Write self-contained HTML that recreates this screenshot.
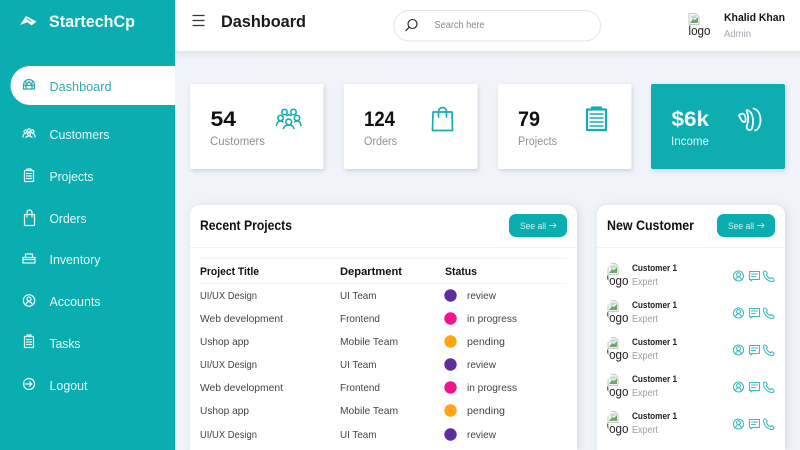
<!DOCTYPE html>
<html lang="en"><head><meta charset="utf-8"><title>Dashboard</title>
<style>
html,body{margin:0;padding:0;width:800px;height:450px;overflow:hidden;background:#f0f3f9}
svg{display:block}
text{font-family:"Liberation Sans",sans-serif}
.nav{font-size:13px;fill:#e6f9f9}
.td{font-size:10.3px;fill:#444}
.th{font-size:11px;font-weight:700;fill:#111}
.c1{font-size:9px;font-weight:700;fill:#222}
.c2{font-size:10px;fill:#9a9fa8}
.lb{font-size:11.5px;fill:#8d9299}
.num{font-size:21px;font-weight:700;fill:#111}
.see{font-size:9.5px;fill:#d4f3f3}
.h2{font-size:14px;font-weight:700;fill:#111}
.alt{font-size:12.5px;fill:#222}
.ic{fill:none;stroke:#14aeb0;stroke-width:1.6;stroke-linecap:round;stroke-linejoin:round}
.nv{fill:none;stroke:#e6f9f9;stroke-width:1.25;stroke-linecap:round;stroke-linejoin:round}
.mi{fill:none;stroke:#3dbcbe;stroke-width:1.1;stroke-linecap:round;stroke-linejoin:round}
</style></head><body>
<svg width="800" height="450" viewBox="0 0 800 450" xmlns="http://www.w3.org/2000/svg">
<defs>
<linearGradient id="hs" x1="0" y1="0" x2="0" y2="1"><stop offset="0" stop-color="#e4e6ea"/><stop offset="1" stop-color="#f0f3f9"/></linearGradient>
<filter id="sh" x="-10%" y="-10%" width="120%" height="125%"><feDropShadow dx="1" dy="2" stdDeviation="2" flood-color="#8a94a8" flood-opacity=".35"/></filter>
<filter id="sp" x="-5%" y="-5%" width="110%" height="110%"><feDropShadow dx="2" dy="1" stdDeviation="4" flood-color="#8a94a8" flood-opacity=".28"/></filter>
<clipPath id="cc"><circle cx="621" cy="274" r="14.5"/></clipPath>
<symbol id="bk" viewBox="0 0 12 12" overflow="visible"><path d="M1 .5h7l3 3v8H1z" fill="#f4f6f4" stroke="#b5bcb8" stroke-width=".8"/><path d="M2 10l3-4 2 1 3-3v6z" fill="#6fa86a"/><path d="M3 3l5-1 1 2-5 2z" fill="#c4d6e4"/></symbol>
<symbol id="mini" viewBox="0 0 44 14" overflow="visible">
<circle cx="6.500" cy="7" r="5" class="mi"/><circle cx="6.500" cy="5.600" r="1.900" class="mi"/><path d="M3.500 10.800c.8-2 1.900-3 3-3s2.200 1 3 3" class="mi"/>
<path d="M17.500 2.500h10v8h-7l-1.500 1.500v-1.500h-1.500z" class="mi"/><path d="M19.500 5h6M19.500 7.500h4" class="mi"/>
<path d="M33 2c1 0 2 1.500 2.300 2.500l-1 1c.8 2 2.200 3.400 4.200 4.200l1-1c1 .3 2.500 1.300 2.500 2.300 0 1-1 1.500-2 1.500-4.500-.3-8-4-8.500-8.500 0-1 .5-2 1.500-2z" class="mi"/>
</symbol>
</defs>

<rect width="800" height="450" fill="#f0f3f9"/>

<!-- header -->
<rect x="175" y="51" width="625" height="9" fill="url(#hs)"/>
<rect x="175" y="0" width="625" height="51" fill="#fff"/>
<path d="M192.500 15.500h12M192.500 20.500h12M192.500 25.500h12" stroke="#333" stroke-width="1.300" fill="none"/>
<text x="221" y="27" font-size="17" font-weight="700" fill="#1a1a1a" textLength="85" lengthAdjust="spacingAndGlyphs">Dashboard</text>
<rect x="394" y="10.500" width="206.500" height="30.500" rx="15.250" fill="#fff" stroke="#e3e5e8"/>
<circle cx="412.500" cy="24" r="4.500" fill="none" stroke="#222" stroke-width="1.100"/><path d="M409 27.500l-3.500 3.500" stroke="#222" stroke-width="1.200"/>
<text x="434.500" y="28" font-size="10" fill="#8a8a8a" textLength="50" lengthAdjust="spacingAndGlyphs">Search here</text>
<use href="#bk" x="688" y="13" width="12" height="12"/>
<text x="688.500" y="35" class="alt" textLength="22" lengthAdjust="spacingAndGlyphs">logo</text>
<text x="724" y="21" font-size="11" font-weight="700" fill="#151515" textLength="61" lengthAdjust="spacingAndGlyphs">Khalid Khan</text>
<text x="724" y="37" font-size="10" fill="#a4a9b0" textLength="27" lengthAdjust="spacingAndGlyphs">Admin</text>

<!-- sidebar -->
<rect width="175" height="450" fill="#0aadb0"/>
<path d="M20 25l6-9 10.500 5.500-5 4-4-3.200z" fill="#fff"/><path d="M26.500 18.500l5 3" stroke="#0aadb0" stroke-width=".8" fill="none"/>
<text x="49" y="27" font-size="16.500" font-weight="700" fill="#f3fdfd" textLength="86" lengthAdjust="spacingAndGlyphs">StartechCp</text>
<path d="M175 66H30a19.500 19.500 0 0 0 0 39h145z" fill="#fff"/>
<path d="M23.500 89v-4a5.500 5.500 0 0 1 11 0v4zM23.500 85.500h11M26 81.500v7.500M32 81.500v7.500M26 85.500l3-4 3 4" fill="none" stroke="#2aa9ab" stroke-width="1.200"/>
<text x="49.500" y="91" class="nav" style="fill:#2fabad" textLength="62" lengthAdjust="spacingAndGlyphs">Dashboard</text>

<g class="nv"><circle cx="29" cy="130.500" r="1.600"/><circle cx="25.500" cy="131.500" r="1.500"/><circle cx="32.500" cy="131.500" r="1.500"/><circle cx="29" cy="134" r="1.400"/><path d="M23 137c0-2 1-3.500 2.500-3.500M35 137c0-2-1-3.500-2.500-3.500M26 137.500c.5-1 1.500-1.500 3-1.500s2.500.5 3 1.500"/></g>
<text x="49.500" y="139" class="nav" textLength="60" lengthAdjust="spacingAndGlyphs">Customers</text>
<g class="nv"><path d="M24.500 170.500h9v11h-9zM27 170.500v-1.500h4v1.500M26.500 173.500h5M26.500 176h5M26.500 178.500h5"/></g>
<text x="49.500" y="181" class="nav" textLength="44" lengthAdjust="spacingAndGlyphs">Projects</text>
<g class="nv"><path d="M24.500 214.500h10v11h-10zM27 217v-4.500a2.500 2.500 0 0 1 5 0v4.500"/></g>
<text x="49.500" y="223" class="nav" textLength="37" lengthAdjust="spacingAndGlyphs">Orders</text>
<g class="nv"><path d="M23 257.500h12v5.500h-12zM25.500 257.500v-3.500h7v3.500M23 259.500h12"/></g>
<text x="49.500" y="264" class="nav" textLength="51" lengthAdjust="spacingAndGlyphs">Inventory</text>
<g class="nv"><circle cx="29" cy="300.500" r="5.700"/><circle cx="29" cy="299" r="2"/><path d="M25.500 305c.7-2.200 2-3.300 3.500-3.300s2.800 1.100 3.500 3.300"/></g>
<text x="49.500" y="306" class="nav" textLength="51" lengthAdjust="spacingAndGlyphs">Accounts</text>
<g class="nv"><path d="M24.500 336.500h9v11h-9zM27 336.500v-1.500h4v1.500M26.500 339.500h5M26.500 342h5M26.500 344.500h5"/></g>
<text x="49.500" y="348" class="nav" textLength="31" lengthAdjust="spacingAndGlyphs">Tasks</text>
<g class="nv"><circle cx="29" cy="384" r="5.500"/><path d="M25 384h6.500M29.500 381.800l2.200 2.200-2.200 2.200"/></g>
<text x="49.500" y="390" class="nav" textLength="38" lengthAdjust="spacingAndGlyphs">Logout</text>

<!-- stat cards -->
<rect x="190" y="84" width="133.500" height="85" rx="2" fill="#fff" filter="url(#sh)"/>
<rect x="344" y="84" width="133.500" height="85" rx="2" fill="#fff" filter="url(#sh)"/>
<rect x="498" y="84" width="133.500" height="85" rx="2" fill="#fff" filter="url(#sh)"/>
<rect x="651" y="84" width="134" height="85" rx="2" fill="#0aadb0" filter="url(#sh)"/>

<text x="210.500" y="126" class="num" textLength="25.500" lengthAdjust="spacingAndGlyphs">54</text>
<text x="210" y="145" class="lb" textLength="55" lengthAdjust="spacingAndGlyphs">Customers</text>
<g class="ic"><circle cx="284.500" cy="112" r="2.700"/><circle cx="293.500" cy="112" r="2.700"/><circle cx="280.500" cy="118" r="2.700"/><circle cx="297" cy="118" r="2.700"/><circle cx="288.700" cy="122" r="2.900"/><path d="M276.500 125.500c.3-2.800 1.800-4.500 4-4.500 1 0 1.800.3 2.500.9M301 125.500c-.3-2.800-1.800-4.500-4-4.500-1 0-1.800.3-2.500.9M283.500 128.500c.5-2.300 2.500-3.500 5.200-3.500s4.700 1.200 5.200 3.500M287 115.500c.7-.4 1.400-.6 2-.6s1.300.2 2 .6"/></g>

<text x="364" y="126" class="num" textLength="31" lengthAdjust="spacingAndGlyphs">124</text>
<text x="364" y="145" class="lb" textLength="33" lengthAdjust="spacingAndGlyphs">Orders</text>
<g class="ic" style="stroke-width:1.700"><path d="M433 112h19l.5 18.500h-20z"/><path d="M438.500 117v-5.500a4 4 0 0 1 8 0v5.500"/></g>

<text x="518" y="126" class="num" textLength="22" lengthAdjust="spacingAndGlyphs">79</text>
<text x="518" y="145" class="lb" textLength="39" lengthAdjust="spacingAndGlyphs">Projects</text>
<g class="ic" style="stroke-width:2.200;stroke-linecap:butt"><path d="M587 109.500h19v20.500h-19zM592 109.500v-2h9v2"/><path d="M589.500 114h14M589.500 118h14M589.500 122h14M589.500 126h14" stroke-width="1.500"/></g>

<text x="671.500" y="126" class="num" style="fill:#f2fcfc" textLength="37.500" lengthAdjust="spacingAndGlyphs">$6k</text>
<text x="671" y="145" class="lb" style="fill:#e0f7f7" textLength="38" lengthAdjust="spacingAndGlyphs">Income</text>
<g fill="none" stroke="#f2fcfc" stroke-width="1.800" stroke-linecap="round" stroke-linejoin="round"><path d="M739 115.500c2-2.500 5-2.500 6 .5 1 3 1 6-1 6-2 0-3.500-3.500-5-6.500z"/><path d="M747 110c4 1 6 5.500 6 11 0 5-1 9-3 9-2.500 0-4-2-3-4.500 1.300-4 1.800-8.500.2-12.500-.8-2-.9-3-.2-3z"/><path d="M753.500 108.500c4.500 1 7 6 7 11.500s-2.500 10-5.500 10.500"/></g>

<!-- recent projects panel -->
<path d="M190 450V215a10 10 0 0 1 10-10h367a10 10 0 0 1 10 10v235z" fill="#fff" filter="url(#sp)"/>
<path d="M190 247.500h387" stroke="#f2f3f5"/>
<text x="200" y="230" class="h2" textLength="92" lengthAdjust="spacingAndGlyphs">Recent Projects</text>
<rect x="509" y="214" width="58" height="23" rx="7" fill="#0aadb0"/>
<text x="520" y="229" class="see" textLength="26" lengthAdjust="spacingAndGlyphs">See all</text>
<path d="M549 225.500h7M553.500 223l2.500 2.500-2.500 2.500" stroke="#d4f3f3" stroke-width=".8" fill="none"/>
<path d="M200 258h367M200 283.500h367" stroke="#f1f2f4"/>
<text x="200" y="275" class="th" textLength="59" lengthAdjust="spacingAndGlyphs">Project Title</text>
<text x="340" y="275" class="th" textLength="62" lengthAdjust="spacingAndGlyphs">Department</text>
<text x="445" y="275" class="th" textLength="32" lengthAdjust="spacingAndGlyphs">Status</text>

<text x="200" y="299" class="td" textLength="57" lengthAdjust="spacingAndGlyphs">UI/UX Design</text><text x="340" y="299" class="td" textLength="36.500" lengthAdjust="spacingAndGlyphs">UI Team</text><circle cx="450.500" cy="295.500" r="6.200" fill="#5f2d9b"/><text x="467" y="299" class="td" textLength="29" lengthAdjust="spacingAndGlyphs">review</text>
<text x="200" y="322" class="td" textLength="83" lengthAdjust="spacingAndGlyphs">Web development</text><text x="340" y="322" class="td" textLength="40" lengthAdjust="spacingAndGlyphs">Frontend</text><circle cx="450.500" cy="318.500" r="6.200" fill="#f0148f"/><text x="467" y="322" class="td" textLength="50" lengthAdjust="spacingAndGlyphs">in progress</text>
<text x="200" y="345" class="td" textLength="49" lengthAdjust="spacingAndGlyphs">Ushop app</text><text x="340" y="345" class="td" textLength="58" lengthAdjust="spacingAndGlyphs">Mobile Team</text><circle cx="450.500" cy="341.500" r="6.200" fill="#ffa412"/><text x="467" y="345" class="td" textLength="38" lengthAdjust="spacingAndGlyphs">pending</text>
<text x="200" y="368" class="td" textLength="57" lengthAdjust="spacingAndGlyphs">UI/UX Design</text><text x="340" y="368" class="td" textLength="36.500" lengthAdjust="spacingAndGlyphs">UI Team</text><circle cx="450.500" cy="364.500" r="6.200" fill="#5f2d9b"/><text x="467" y="368" class="td" textLength="29" lengthAdjust="spacingAndGlyphs">review</text>
<text x="200" y="391" class="td" textLength="83" lengthAdjust="spacingAndGlyphs">Web development</text><text x="340" y="391" class="td" textLength="40" lengthAdjust="spacingAndGlyphs">Frontend</text><circle cx="450.500" cy="387.500" r="6.200" fill="#f0148f"/><text x="467" y="391" class="td" textLength="50" lengthAdjust="spacingAndGlyphs">in progress</text>
<text x="200" y="414" class="td" textLength="49" lengthAdjust="spacingAndGlyphs">Ushop app</text><text x="340" y="414" class="td" textLength="58" lengthAdjust="spacingAndGlyphs">Mobile Team</text><circle cx="450.500" cy="410.500" r="6.200" fill="#ffa412"/><text x="467" y="414" class="td" textLength="38" lengthAdjust="spacingAndGlyphs">pending</text>
<text x="200" y="438" class="td" textLength="57" lengthAdjust="spacingAndGlyphs">UI/UX Design</text><text x="340" y="438" class="td" textLength="36.500" lengthAdjust="spacingAndGlyphs">UI Team</text><circle cx="450.500" cy="434.500" r="6.200" fill="#5f2d9b"/><text x="467" y="438" class="td" textLength="29" lengthAdjust="spacingAndGlyphs">review</text>

<!-- new customer panel -->
<path d="M597 450V215a10 10 0 0 1 10-10h168a10 10 0 0 1 10 10v235z" fill="#fff" filter="url(#sp)"/>
<path d="M597 247.500h188" stroke="#f2f3f5"/>
<text x="607" y="230" class="h2" textLength="87" lengthAdjust="spacingAndGlyphs">New Customer</text>
<rect x="717" y="214" width="58" height="23" rx="7" fill="#0aadb0"/>
<text x="728" y="229" class="see" textLength="26" lengthAdjust="spacingAndGlyphs">See all</text>
<path d="M757 225.500h7M761.500 223l2.500 2.500-2.500 2.500" stroke="#d4f3f3" stroke-width=".8" fill="none"/>

<g><g clip-path="url(#cc)"><use href="#bk" x="607" y="263" width="12" height="12"/><text x="606.500" y="285" class="alt" textLength="22" lengthAdjust="spacingAndGlyphs">logo</text></g><text x="632" y="271" class="c1" textLength="45" lengthAdjust="spacingAndGlyphs">Customer 1</text><text x="632" y="285" class="c2" textLength="26" lengthAdjust="spacingAndGlyphs">Expert</text><use href="#mini" x="732" y="269" width="44" height="14"/></g>
<g transform="translate(0,37)"><g clip-path="url(#cc)"><use href="#bk" x="607" y="263" width="12" height="12"/><text x="606.500" y="285" class="alt" textLength="22" lengthAdjust="spacingAndGlyphs">logo</text></g><text x="632" y="271" class="c1" textLength="45" lengthAdjust="spacingAndGlyphs">Customer 1</text><text x="632" y="285" class="c2" textLength="26" lengthAdjust="spacingAndGlyphs">Expert</text><use href="#mini" x="732" y="269" width="44" height="14"/></g>
<g transform="translate(0,74)"><g clip-path="url(#cc)"><use href="#bk" x="607" y="263" width="12" height="12"/><text x="606.500" y="285" class="alt" textLength="22" lengthAdjust="spacingAndGlyphs">logo</text></g><text x="632" y="271" class="c1" textLength="45" lengthAdjust="spacingAndGlyphs">Customer 1</text><text x="632" y="285" class="c2" textLength="26" lengthAdjust="spacingAndGlyphs">Expert</text><use href="#mini" x="732" y="269" width="44" height="14"/></g>
<g transform="translate(0,111)"><g clip-path="url(#cc)"><use href="#bk" x="607" y="263" width="12" height="12"/><text x="606.500" y="285" class="alt" textLength="22" lengthAdjust="spacingAndGlyphs">logo</text></g><text x="632" y="271" class="c1" textLength="45" lengthAdjust="spacingAndGlyphs">Customer 1</text><text x="632" y="285" class="c2" textLength="26" lengthAdjust="spacingAndGlyphs">Expert</text><use href="#mini" x="732" y="269" width="44" height="14"/></g>
<g transform="translate(0,148)"><g clip-path="url(#cc)"><use href="#bk" x="607" y="263" width="12" height="12"/><text x="606.500" y="285" class="alt" textLength="22" lengthAdjust="spacingAndGlyphs">logo</text></g><text x="632" y="271" class="c1" textLength="45" lengthAdjust="spacingAndGlyphs">Customer 1</text><text x="632" y="285" class="c2" textLength="26" lengthAdjust="spacingAndGlyphs">Expert</text><use href="#mini" x="732" y="269" width="44" height="14"/></g>
</svg>
</body></html>
